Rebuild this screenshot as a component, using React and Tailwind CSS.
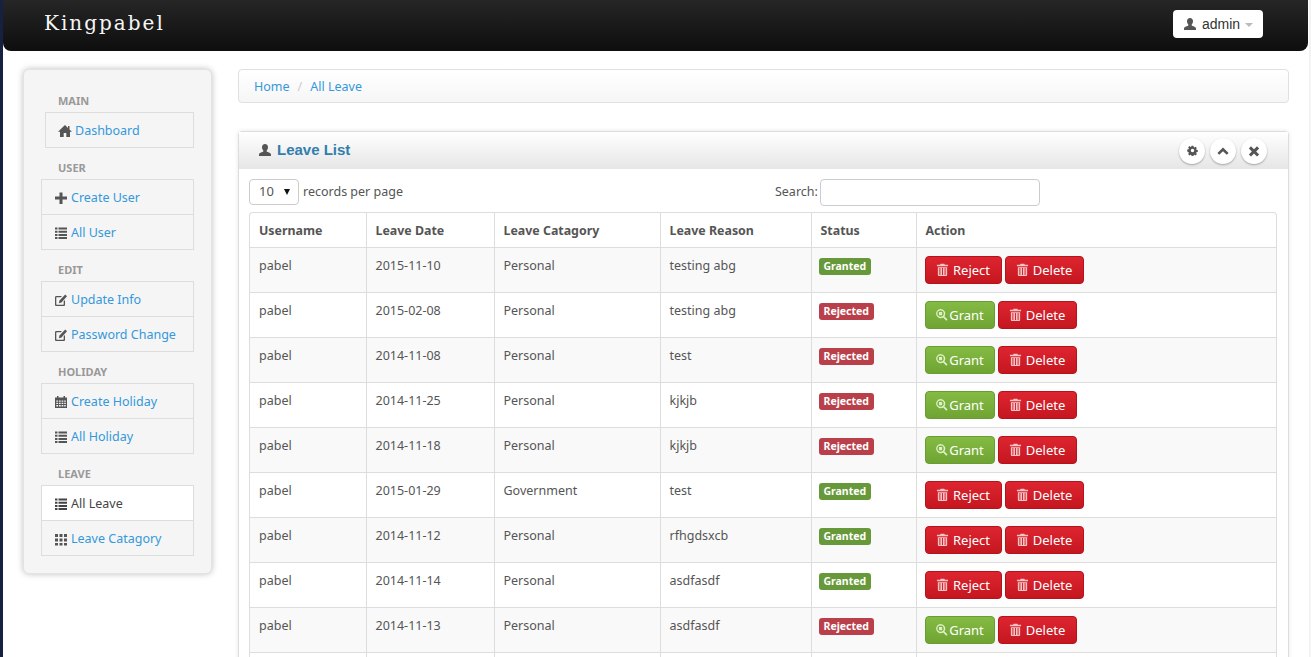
import React from 'react';

const Icon = ({ size = 14, className = '', children }) => (
  <svg width={size} height={size} viewBox="0 0 14 14" fill="currentColor" className={`shrink-0 ${className}`}>
    {children}
  </svg>
);

const UserIcon = (p) => (
  <Icon {...p}>
    <path d="M7 1c-1.900 0-3 1.300-3 3.200 0 1.300.5 2.500 1.300 3.200v1.100c-.6.6-4.300 1-4.300 3.200V13h12v-1.300c0-2.200-3.700-2.600-4.300-3.200V7.400C9.500 6.700 10 5.500 10 4.200 10 2.300 8.900 1 7 1z" />
  </Icon>
);
const HomeIcon = (p) => (
  <Icon {...p}>
    <path d="M7 1 0 7.800h2V13h3.700V9h2.600v4H12V7.800h2l-2.500-2.400V2H10v1.900z" />
  </Icon>
);
const PlusIcon = (p) => (
  <Icon {...p}>
    <path d="M5.500 1.500h3v4h4.500v3H8.500V13h-3V8.500H1v-3h4.500z" />
  </Icon>
);
const ListIcon = (p) => (
  <Icon {...p}>
    <path d="M1 1.500h2.500v2H1zM4.500 1.500H13v2H4.500zM1 4.700h2.500v2H1zM4.500 4.700H13v2H4.500zM1 7.900h2.500v2H1zM4.500 7.900H13v2H4.500zM1 11.100h2.500v2H1zM4.500 11.100H13v2H4.500z" />
  </Icon>
);
const EditIcon = (p) => (
  <Icon {...p}>
    <path d="M2.500 3H8L6.700 4.300H2.700c-.3 0-.4.1-.4.4v6.600c0 .3.1.4.4.4h6.600c.3 0 .4-.1.4-.4V8.300L11 7v4.500c0 1-.5 1.500-1.500 1.500h-7c-1 0-1.500-.5-1.500-1.500v-7C1 3.500 1.500 3 2.500 3z" />
    <path d="M11.200 1.500 13 3.300 7.500 9.500l-2.700.7.700-2.700z" />
  </Icon>
);
const CalendarIcon = (p) => (
  <Icon {...p}>
    <path
      fillRule="evenodd"
      d="M3 1h1.500v1.500h5V1H11v1.500h2V13H1V2.500h2zM2.300 5.500v1.300h1.800V5.500zm2.700 0v1.300h1.700V5.500zm2.600 0v1.300h1.700V5.500zm2.600 0v1.300h1.600V5.500zM2.300 7.700V9h1.800V7.700zm2.700 0V9h1.700V7.700zm2.600 0V9h1.700V7.700zm2.600 0V9h1.600V7.700zM2.300 9.900v1.700h1.800V9.900zm2.700 0v1.700h1.700V9.900zm2.600 0v1.700h1.700V9.900zm2.600 0v1.700h1.600V9.900z"
    />
  </Icon>
);
const GridIcon = (p) => (
  <Icon {...p}>
    <path d="M1 2h3v3H1zM5.500 2h3v3h-3zM10 2h3v3h-3zM1 6.500h3v3H1zM5.500 6.500h3v3h-3zM10 6.500h3v3h-3zM1 11h3v2.500H1zM5.500 11h3v2.500h-3zM10 11h3v2.500h-3z" />
  </Icon>
);
const TrashIcon = (p) => (
  <Icon {...p}>
    <path
      fillRule="evenodd"
      d="M5 .8h4l.6 1.200H13v1.500H1V2h3.400zM2 4.500h10V13c0 .6-.4 1-1 1H3c-.6 0-1-.4-1-1zM3.700 5.500v7.500h1V5.500zm2.800 0v7.500h1V5.500zm2.800 0v7.500h1V5.500z"
    />
  </Icon>
);
const ZoomIcon = (p) => (
  <Icon {...p}>
    <path
      fillRule="evenodd"
      d="M6 1a5 5 0 0 1 4 8l3.500 3.500-1.300 1.300L8.800 10.300A5 5 0 1 1 6 1zm0 1.600a3.400 3.400 0 1 0 0 6.800 3.400 3.400 0 0 0 0-6.800zM4.300 4.300h3.400v3.400H4.300z"
    />
  </Icon>
);
const CogIcon = (p) => (
  <Icon {...p}>
    <path
      fillRule="evenodd"
      d="M5.800 1h2.400l.3 1.700 1 .4 1.400-1 1.700 1.700-1 1.400.4 1 1.700.3v2.400l-1.700.3-.4 1 1 1.400-1.700 1.700-1.400-1-1 .4-.3 1.700H5.800l-.3-1.700-1-.4-1.400 1-1.700-1.700 1-1.400-.4-1L.3 8.200V5.800L2 5.500l.4-1-1-1.400 1.700-1.700 1.400 1 1-.4zM7 4.800a2.200 2.200 0 1 0 0 4.400 2.200 2.200 0 0 0 0-4.400z"
    />
  </Icon>
);
const ChevronUpIcon = (p) => (
  <Icon {...p}>
    <path d="M7 3 13.500 9.300 11.400 11.400 7 7.200 2.600 11.400.5 9.300z" />
  </Icon>
);
const CloseIcon = (p) => (
  <Icon {...p}>
    <path d="M3.500 1.500 7 5l3.500-3.500 2.500 2.500L9.500 7.500 13 11l-2.500 2.500L7 10l-3.500 3.500L1 11l3.500-3.500L1 4z" />
  </Icon>
);

const menu = [
  { head: 'MAIN', inset: true, items: [{ icon: HomeIcon, label: 'Dashboard' }] },
  {
    head: 'USER',
    items: [
      { icon: PlusIcon, label: 'Create User' },
      { icon: ListIcon, label: 'All User' },
    ],
  },
  {
    head: 'EDIT',
    items: [
      { icon: EditIcon, label: 'Update Info' },
      { icon: EditIcon, label: 'Password Change' },
    ],
  },
  {
    head: 'HOLIDAY',
    items: [
      { icon: CalendarIcon, label: 'Create Holiday' },
      { icon: ListIcon, label: 'All Holiday' },
    ],
  },
  {
    head: 'LEAVE',
    items: [
      { icon: ListIcon, label: 'All Leave', active: true },
      { icon: GridIcon, label: 'Leave Catagory' },
    ],
  },
];

const rows = [
  ['2015-11-10', 'Personal', 'testing abg', true],
  ['2015-02-08', 'Personal', 'testing abg', false],
  ['2014-11-08', 'Personal', 'test', false],
  ['2014-11-25', 'Personal', 'kjkjb', false],
  ['2014-11-18', 'Personal', 'kjkjb', false],
  ['2015-01-29', 'Government', 'test', true],
  ['2014-11-12', 'Personal', 'rfhgdsxcb', true],
  ['2014-11-14', 'Personal', 'asdfasdf', true],
  ['2014-11-13', 'Personal', 'asdfasdf', false],
];

const redBtn =
  'flex h-7 items-center justify-center gap-[4px] rounded-[4px] border border-[#b5121b] bg-gradient-to-b from-[#dd2530] to-[#c5161f] pt-[2px] text-[13px] text-white';

const Sidebar = () => (
  <aside className="h-[505px] w-[189px] shrink-0 rounded-md border border-[#e3e3e3] bg-[#f5f5f5] px-[17px] pt-[11px] shadow-[0_0_6px_rgba(0,0,0,0.25)]">
    {menu.map((section) => (
      <div key={section.head}>
        <div className="flex h-[31px] items-end pb-[3px] pl-[17px] text-[11px] font-bold leading-4 text-[#999]">
          {section.head}
        </div>
        <div className={section.inset ? 'ml-1' : ''}>
          {section.items.map((item, i) => {
            const ItemIcon = item.icon;
            return (
              <div
                key={item.label}
                className={`flex h-[36px] items-center gap-[3px] border border-[#ddd] pl-[12px] text-[12.5px] ${i > 0 ? '-mt-px' : ''} ${item.active ? 'bg-white text-[#444]' : 'text-[#3498db]'}`}
              >
                <ItemIcon size={14} className={`mt-px ${item.active ? 'text-[#444]' : 'text-[#555]'}`} />
                <span className="pt-[2px]">{item.label}</span>
              </div>
            );
          })}
        </div>
      </div>
    ))}
  </aside>
);

const CircleButton = ({ children }) => (
  <div className="flex h-[26px] w-[26px] items-center justify-center rounded-full bg-white text-[#555] shadow-[0_1px_2px_rgba(0,0,0,0.3)]">
    {children}
  </div>
);

const LeaveRow = ({ row, index }) => {
  const [date, category, reason, granted] = row;
  const cell = 'border border-[#ddd] align-top';
  const text = `${cell} px-[9px] pt-[9px]`;
  return (
    <tr className={`h-[45px] ${index % 2 === 0 ? 'bg-[#f9f9f9]' : 'bg-white'}`}>
      <td className={`${text} border-l-0`}>pabel</td>
      <td className={text}>{date}</td>
      <td className={text}>{category}</td>
      <td className={text}>{reason}</td>
      <td className={`${cell} px-[8px] pt-[9px]`}>
        <span
          className={`-ml-px inline-block rounded-[3px] px-[5px] text-[10.5px] font-bold leading-[17px] text-white ${granted ? 'bg-[#67983a]' : 'bg-[#b9404a]'}`}
        >
          {granted ? 'Granted' : 'Rejected'}
        </span>
      </td>
      <td className={`${cell} border-r-0 px-[8px] pt-2`}>
        <div className="flex gap-[3px]">
          {granted ? (
            <button className={`${redBtn} w-[77px]`}>
              <TrashIcon size={13} className="-mt-[2px] text-[#f7c3c5]" />
              Reject
            </button>
          ) : (
            <button className="flex h-7 w-[70px] items-center justify-center gap-[1px] rounded-[4px] border border-[#6b9c33] bg-gradient-to-b from-[#84bb43] to-[#6fa433] pt-[2px] text-[13px] text-white">
              <ZoomIcon size={13} className="-mt-[2px] text-[#dff0c8]" />
              Grant
            </button>
          )}
          <button className={`${redBtn} w-[79px]`}>
            <TrashIcon size={13} className="-mt-[2px] text-[#f7c3c5]" />
            Delete
          </button>
        </div>
      </td>
    </tr>
  );
};

export default function App() {
  return (
    <div className="flex h-screen overflow-hidden bg-white font-['Noto_Sans',sans-serif] text-[12.5px] text-[#555]">
      <div className="w-[3px] shrink-0 bg-[#14213f]" />
      <div className="min-w-0 flex-1">
        <header className="mr-px flex h-[51px] items-center justify-between rounded-b-lg bg-gradient-to-b from-[#262626] to-[#0e0e0e] pl-[41px] pr-[45px]">
          <div className="-mt-[5px] font-['DejaVu_Serif',serif] text-[20px] tracking-[2px] text-[#f5f5f5]">Kingpabel</div>
          <button className="-mt-[3px] flex h-[28px] w-[90px] items-center justify-center gap-[5px] rounded-[4px] bg-white font-['Liberation_Sans',sans-serif] text-[14px] text-[#333]">
            <UserIcon size={14} className="text-[#555]" />
            admin
            <span className="mt-[1px] h-0 w-0 border-x-[4px] border-t-[4px] border-x-transparent border-t-[#bbb]" />
          </button>
        </header>

        <div className="flex gap-[26px] px-[20px] pt-[18px]">
          <Sidebar />
          <main className="min-w-0 flex-1">
            <nav className="flex h-[34px] items-center gap-[7px] rounded-[4px] border border-[#e0e0e0] bg-gradient-to-b from-white to-[#f6f6f6] pl-[15px] pt-[2px] text-[12.5px] text-[#3498db]">
              <span>Home</span>
              <span className="px-[1px] text-[#ccc]">/</span>
              <span>All Leave</span>
            </nav>

            <section className="mt-[28px] rounded-t-[4px] border border-[#ddd] bg-white pb-4 shadow-[0_0_4px_rgba(0,0,0,0.1)]">
              <div className="flex h-[37px] items-center justify-between bg-gradient-to-b from-white to-[#e6e6e6] pl-[19px] pr-[21px]">
                <div className="flex items-center gap-[5px] font-['Liberation_Sans',sans-serif] text-[15px] font-bold text-[#317eac]">
                  <UserIcon size={14} className="-mt-[2px] text-[#555]" />
                  Leave List
                </div>
                <div className="flex gap-[5px]">
                  <CircleButton><CogIcon size={11} /></CircleButton>
                  <CircleButton><ChevronUpIcon size={12} /></CircleButton>
                  <CircleButton><CloseIcon size={12} /></CircleButton>
                </div>
              </div>

              <div className="pl-[10px] pr-[11px] pt-[10px]">
                <div className="flex h-[33px] items-start">
                  <div className="flex h-[26px] w-[50px] items-center justify-between rounded-[4px] border border-[#ccc] pl-[9px] pr-[8px] text-[13px]">
                    10
                    <span className="h-0 w-0 border-x-[3.5px] border-t-[6px] border-x-transparent border-t-[#111]" />
                  </div>
                  <span className="ml-[4px] mt-[4px]">records per page</span>
                  <span className="ml-[372px] mt-[4px]">Search:</span>
                  <div className="ml-[2px] h-[27px] w-[220px] rounded-[4px] border border-[#ccc]" />
                </div>

                <div className="overflow-hidden rounded-t-[4px] border-x border-t border-[#ddd]">
                  <table className="w-full table-fixed border-collapse text-left">
                    <colgroup>
                      <col className="w-[116px]" />
                      <col className="w-[128px]" />
                      <col className="w-[166px]" />
                      <col className="w-[151px]" />
                      <col className="w-[105px]" />
                      <col />
                    </colgroup>
                    <thead>
                      <tr className="h-[34px]">
                        {['Username', 'Leave Date', 'Leave Catagory', 'Leave Reason', 'Status', 'Action'].map((h) => (
                          <th key={h} className="border-b border-r border-[#ddd] px-[9px] pt-[3px] text-[12.4px] font-bold last:border-r-0">
                            {h}
                          </th>
                        ))}
                      </tr>
                    </thead>
                    <tbody>
                      {rows.map((row, i) => (
                        <LeaveRow key={row[0]} row={row} index={i} />
                      ))}
                      <tr className="h-[45px]">
                        <td className="border border-l-0 border-[#ddd]" />
                        <td className="border border-[#ddd]" />
                        <td className="border border-[#ddd]" />
                        <td className="border border-[#ddd]" />
                        <td className="border border-[#ddd]" />
                        <td className="border border-r-0 border-[#ddd]" />
                      </tr>
                    </tbody>
                  </table>
                </div>
              </div>
            </section>
          </main>
        </div>
      </div>
      <div className="w-[2px] shrink-0 bg-[#f3f3f3]" />
    </div>
  );
}
